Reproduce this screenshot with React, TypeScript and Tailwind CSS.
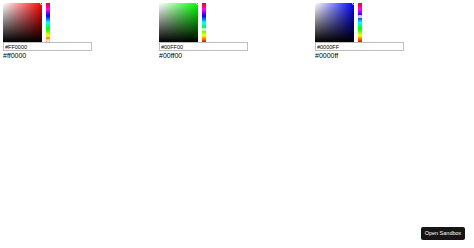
import React from 'react';

type Picker = { hex: string; sat: string; hueTop: string };

const pickers: Picker[] = [
  { hex: '#ff0000', sat: 'bg-[linear-gradient(to_top,#000,transparent),linear-gradient(to_right,#fff,#f00)]', hueTop: 'top-[36px]' },
  { hex: '#00ff00', sat: 'bg-[linear-gradient(to_top,#000,transparent),linear-gradient(to_right,#fff,#0f0)]', hueTop: 'top-[25px]' },
  { hex: '#0000ff', sat: 'bg-[linear-gradient(to_top,#000,transparent),linear-gradient(to_right,#fff,#00f)]', hueTop: 'top-[12px]' },
];

function ColorPicker({ p }: { p: Picker }) {
  return (
    <div className="w-[156px] flex flex-col">
      <div className="flex gap-[4px]">
        <div className={`relative w-[39px] h-[39px] ${p.sat}`}>
          <div className="absolute -top-[1px] -right-[1px] w-[3px] h-[3px] rounded-full border border-white" />
        </div>
        <div className="relative w-[4px] h-[39px] bg-[linear-gradient(to_bottom,#f00,#f0f,#00f,#0ff,#0f0,#ff0,#f00)]">
          <div className={`absolute left-0 w-[4px] h-[3px] rounded-[1px] bg-white/80 ${p.hueTop}`} />
        </div>
      </div>
      <input
        readOnly
        value={p.hex.toUpperCase()}
        className="w-[89px] h-[9px] border border-[#bdbdbd] px-[1px] text-[5.5px] leading-none text-black outline-none"
      />
      <div className="text-[7px] leading-[9px] text-black">{p.hex}</div>
    </div>
  );
}

function App() {
  return (
    <div className="w-[474px] h-[248px] bg-white font-['Liberation_Sans',Arial,sans-serif] relative">
      <div className="flex pt-[3px] pl-[3px]">
        {pickers.map((p) => (
          <ColorPicker key={p.hex} p={p} />
        ))}
      </div>
      <button className="fixed right-[9px] bottom-[8px] w-[44px] h-[13px] rounded-[2px] bg-[#151515] text-white text-[5.5px] leading-none">
        Open Sandbox
      </button>
    </div>
  );
}

export default App;
